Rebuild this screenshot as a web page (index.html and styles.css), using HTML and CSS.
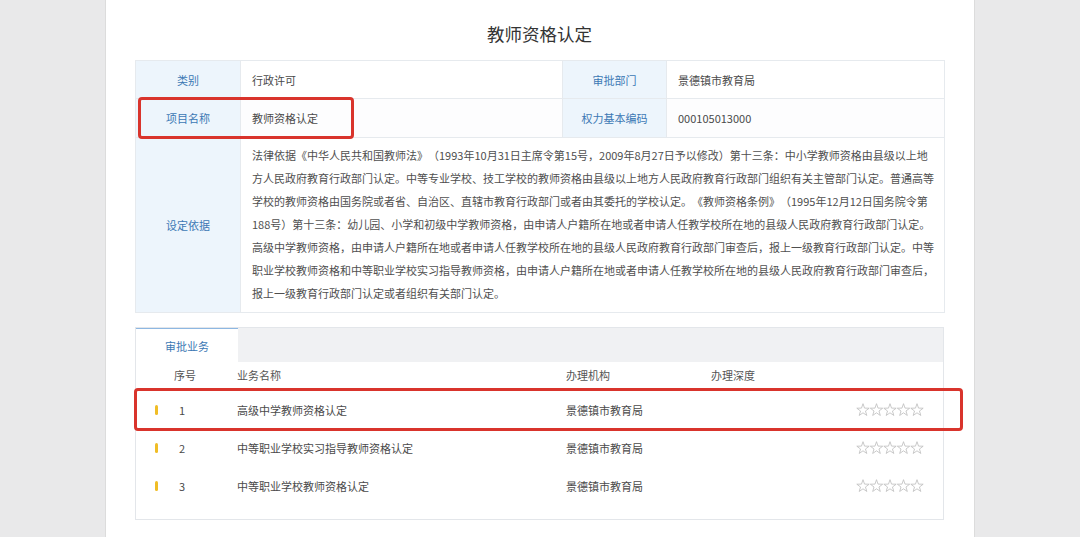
FILE: index.html
```html
<!DOCTYPE html>
<html lang="zh-CN">
<head>
<meta charset="utf-8">
<title>教师资格认定</title>
<link rel="stylesheet" href="styles.css">
</head>
<body>
<svg class="defs" width="0" height="0" aria-hidden="true">
  <symbol id="star" viewBox="0 0 14 14">
    <polygon points="7,0.7 8.53,5.1 13.18,5.19 9.47,8 10.82,12.46 7,9.8 3.18,12.46 4.53,8 0.82,5.19 5.47,5.1" fill="none" stroke="#bdbdbd" stroke-width="0.8" stroke-linejoin="round"/>
  </symbol>
</svg>
<div class="page">
  <h1 class="title">教师资格认定</h1>

  <table class="info">
    <colgroup>
      <col class="col-label">
      <col class="col-value">
      <col class="col-label2">
      <col class="col-value2">
    </colgroup>
    <tr class="row-short">
      <th>类别</th><td>行政许可</td>
      <th>审批部门</th><td>景德镇市教育局</td>
    </tr>
    <tr class="row-short row-alt">
      <th>项目名称</th><td>教师资格认定</td>
      <th>权力基本编码</th><td>000105013000</td>
    </tr>
    <tr>
      <th>设定依据</th>
      <td colspan="3" class="basis">法律依据《中华人民共和国教师法》（1993年10月31日主席令第15号，2009年8月27日予以修改）第十三条：中小学教师资格由县级以上地<br>方人民政府教育行政部门认定。中等专业学校、技工学校的教师资格由县级以上地方人民政府教育行政部门组织有关主管部门认定。普通高等<br>学校的教师资格由国务院或者省、自治区、直辖市教育行政部门或者由其委托的学校认定。《教师资格条例》（1995年12月12日国务院令第<br>188号）第十三条：幼儿园、小学和初级中学教师资格，由申请人户籍所在地或者申请人任教学校所在地的县级人民政府教育行政部门认定。<br>高级中学教师资格，由申请人户籍所在地或者申请人任教学校所在地的县级人民政府教育行政部门审查后，报上一级教育行政部门认定。中等<br>职业学校教师资格和中等职业学校实习指导教师资格，由申请人户籍所在地或者申请人任教学校所在地的县级人民政府教育行政部门审查后，<br>报上一级教育行政部门认定或者组织有关部门认定。</td>
    </tr>
  </table>

  <section class="biz">
    <div class="tabbar">
      <span class="tab is-active">审批业务</span>
    </div>
    <div class="biz-row biz-head">
      <span></span>
      <span class="num">序号</span>
      <span>业务名称</span>
      <span>办理机构</span>
      <span>办理深度</span>
      <span></span>
    </div>
    <div class="biz-row">
      <span class="flag"></span>
      <span class="num">1</span>
      <span>高级中学教师资格认定</span>
      <span>景德镇市教育局</span>
      <span></span>
      <svg class="stars" viewBox="0 0 68 14"><use href="#star" x="0" width="14" height="14"/><use href="#star" x="13.5" width="14" height="14"/><use href="#star" x="27" width="14" height="14"/><use href="#star" x="40.5" width="14" height="14"/><use href="#star" x="54" width="14" height="14"/></svg>
    </div>
    <div class="biz-row">
      <span class="flag"></span>
      <span class="num">2</span>
      <span>中等职业学校实习指导教师资格认定</span>
      <span>景德镇市教育局</span>
      <span></span>
      <svg class="stars" viewBox="0 0 68 14"><use href="#star" x="0" width="14" height="14"/><use href="#star" x="13.5" width="14" height="14"/><use href="#star" x="27" width="14" height="14"/><use href="#star" x="40.5" width="14" height="14"/><use href="#star" x="54" width="14" height="14"/></svg>
    </div>
    <div class="biz-row">
      <span class="flag"></span>
      <span class="num">3</span>
      <span>中等职业学校教师资格认定</span>
      <span>景德镇市教育局</span>
      <span></span>
      <svg class="stars" viewBox="0 0 68 14"><use href="#star" x="0" width="14" height="14"/><use href="#star" x="13.5" width="14" height="14"/><use href="#star" x="27" width="14" height="14"/><use href="#star" x="40.5" width="14" height="14"/><use href="#star" x="54" width="14" height="14"/></svg>
    </div>
  </section>

  <!-- highlight frames drawn over the content -->
  <div class="frame frame-name"></div>
  <div class="frame frame-row"></div>
</div>
</body>
</html>
```

FILE: styles.css
```css
* {
  box-sizing: border-box;
}

html, body {
  margin: 0;
  padding: 0;
}

body {
  background: #e9e9ea;
  font-family: "Noto Sans CJK SC", "Microsoft YaHei", sans-serif;
  font-size: 11px;
  color: #4a4a4a;
  text-spacing-trim: space-all;
}

.defs {
  position: absolute;
  width: 0;
  height: 0;
}

.page {
  position: relative;
  width: 870px;
  min-height: 537px;
  margin: 0 auto;
  background: #fff;
  border-left: 1px solid #dcdcdc;
  border-right: 1px solid #dcdcdc;
  padding: 0 30px 0 29px;
}

.title {
  margin: 0;
  padding-top: 22px;
  height: 60px;
  line-height: 24px;
  font-size: 17.5px;
  font-weight: 400;
  color: #333;
  text-align: center;
}

/* info table */
.info {
  width: 809px;
  border-collapse: collapse;
  table-layout: fixed;
  border: 1px solid #e1e6eb;
}

.col-label { width: 105px; }
.col-value { width: 322px; }
.col-label2 { width: 104px; }
.col-value2 { width: 278px; }

.info th,
.info td {
  border: 1px solid #e6eaee;
  font-weight: 400;
  vertical-align: middle;
}

.info th {
  background: #edf5fc;
  color: #3c78b4;
  text-align: center;
}

.info td {
  padding: 0 10px 0 11px;
  color: #4a4a4a;
  text-align: left;
}

.row-short {
  height: 38px;
}

.row-alt {
  height: 39px;
}

.row-alt td {
  background: #fdfdfe;
}

.info td.basis {
  padding: 6px 6px 7px 11px;
  line-height: 23px;
  color: #4f4f4f;
  white-space: nowrap;
}

/* approval business tabs */
.biz {
  margin-top: 14px;
  width: 809px;
  border: 1px solid #e3e6ea;
  padding-bottom: 14px;
}

.tabbar {
  display: flex;
  height: 34px;
  background: #f0f1f3;
}

.tab {
  width: 102px;
  display: flex;
  align-items: center;
  justify-content: center;
  color: #3c78b4;
}

.tab.is-active {
  background: #fff;
  border-top: 1px solid #8db7e2;
}

.biz-row {
  display: grid;
  grid-template-columns: 34px 67px 329px 145px 145px 1fr;
  align-items: center;
  height: 38px;
  color: #4a4a4a;
}

.biz-head {
  height: 29px;
  padding-bottom: 3px;
  color: #555;
}

.num {
  padding-left: 9px;
}

.biz-head .num {
  padding-left: 4px;
}

.flag {
  justify-self: start;
  margin-left: 19px;
  width: 3px;
  height: 10px;
  border-radius: 1.5px;
  background: #f0bd26;
}

.stars {
  display: block;
  width: 68px;
  height: 14px;
}

/* highlight frames */
.frame {
  position: absolute;
  border: 3px solid #d9342c;
  border-radius: 4px;
  pointer-events: none;
}

.frame-name {
  left: 32px;
  top: 97px;
  width: 216px;
  height: 42px;
}

.frame-row {
  left: 28px;
  top: 388px;
  width: 829px;
  height: 43px;
}
```
